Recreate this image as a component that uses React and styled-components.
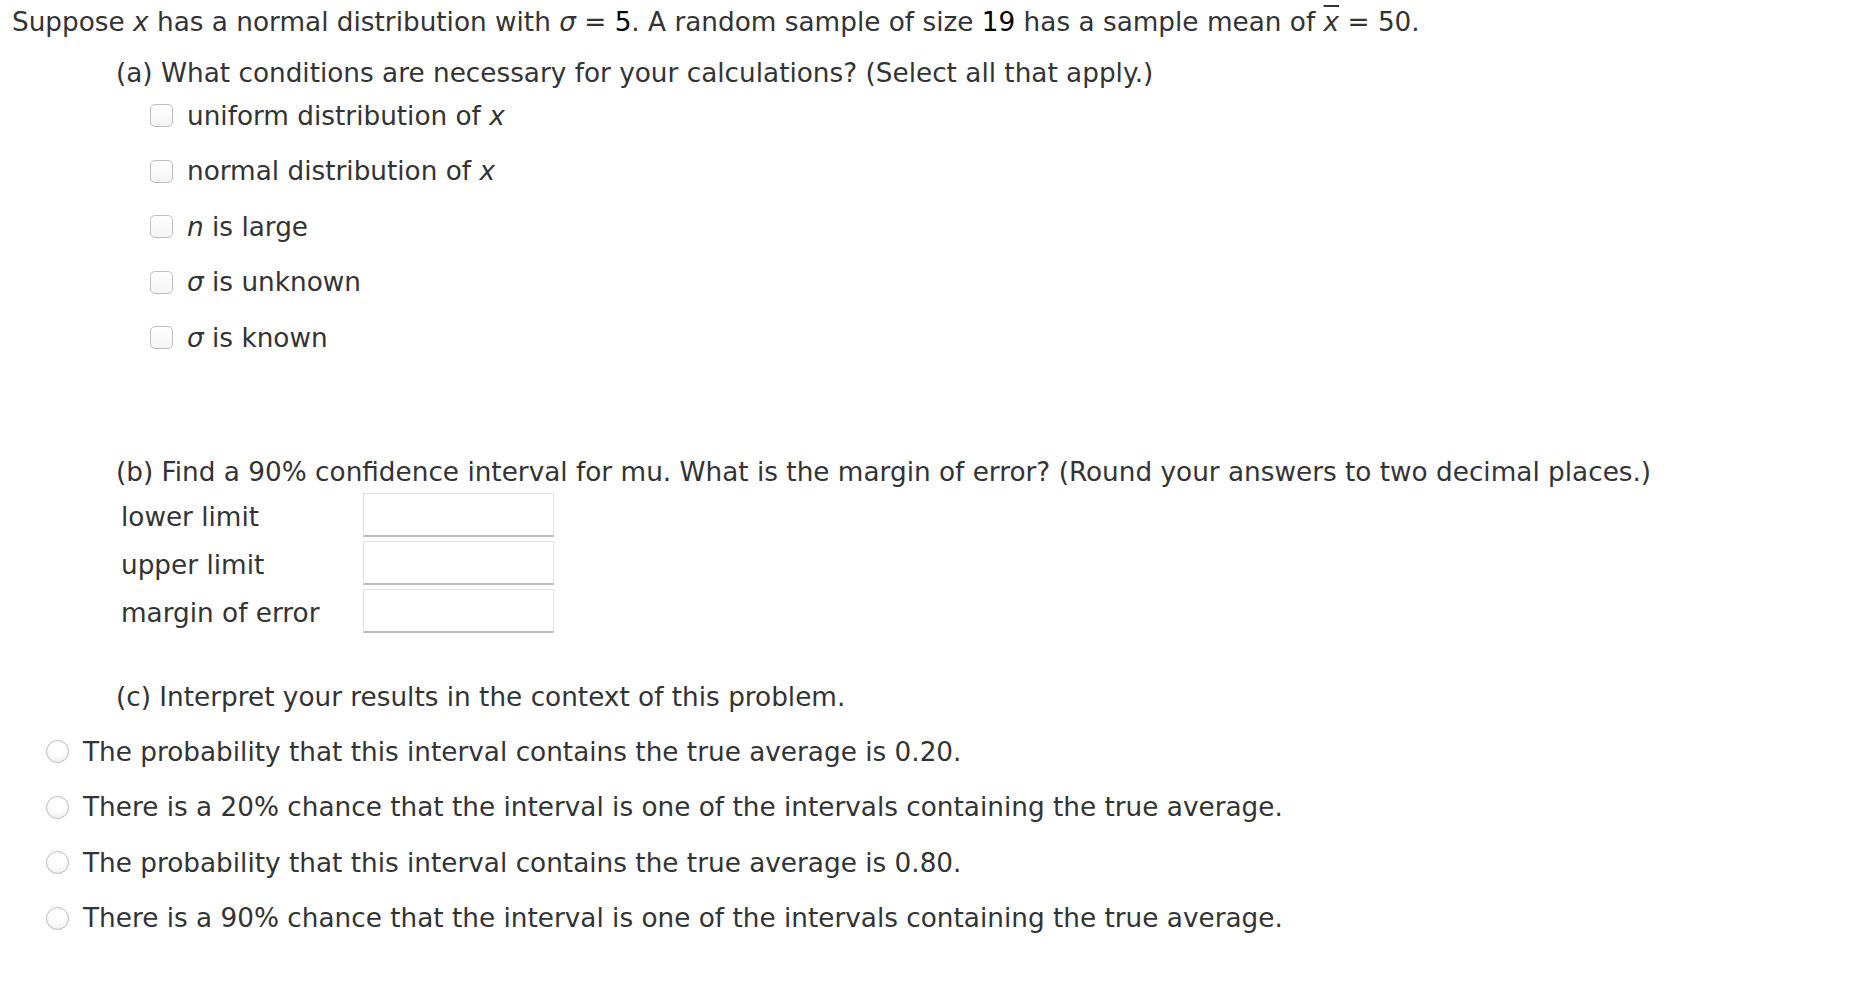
import React from "react";
import styled, { createGlobalStyle } from "styled-components";

const GlobalStyle = createGlobalStyle`
  body {
    margin: 0;
    background: #fff;
    font-family: "DejaVu Sans", Verdana, sans-serif;
    font-size: 26.3px;
    color: #333;
  }
`;

const Page = styled.div`
  padding: 4px 0 40px 12px;
`;

const Intro = styled.p`
  margin: 0;
  line-height: 36px;
`;

const Val = styled.span`
  color: #000;
`;

const Var = styled.i`
  font-style: italic;
`;

const Bar = styled.span`
  font-style: italic;
  text-decoration: overline;
`;

const Part = styled.section`
  margin-top: ${(p) => p.$top}px;
`;

const Heading = styled.div`
  margin-left: 104px;
  line-height: ${(p) => p.$lh || 34}px;
`;

const CheckList = styled.div`
  margin-left: 138px;
`;

const Option = styled.label`
  display: flex;
  align-items: center;
  gap: 14px;
  height: 55.5px;
`;

const Check = styled.span`
  width: 21px;
  height: 21px;
  border: 1px solid #bfbfbf;
  border-radius: 5px;
  background: linear-gradient(#fff, #f4f4f4);
  flex-shrink: 0;
`;

const Fields = styled.div`
  margin: 4px 0 0 109px;
  display: grid;
  grid-template-columns: 242px 191px;
  row-gap: 4px;
  align-items: center;
`;

const FieldLabel = styled.span`
  line-height: 30px;
  padding-top: 4px;
`;

const Field = styled.input`
  box-sizing: border-box;
  height: 44px;
  width: 191px;
  border: 1px solid #e2e2e2;
  border-bottom: 2px solid #bcbcbc;
  background: #fff;
  font: inherit;
  padding: 0 6px;
  outline: none;
`;

const RadioList = styled.div`
  margin-left: 34px;
  margin-top: 10.5px;
`;

const Radio = styled.span`
  width: 21px;
  height: 21px;
  border: 1px solid #bcbcbc;
  border-radius: 50%;
  background: radial-gradient(circle at 50% 30%, #fff 40%, #e9e9e9 100%);
  flex-shrink: 0;
`;

const conditions = [
  <>uniform distribution of <Var>x</Var></>,
  <>normal distribution of <Var>x</Var></>,
  <><Var>n</Var> is large</>,
  <><Var>σ</Var> is unknown</>,
  <><Var>σ</Var> is known</>,
];

const fields = ["lower limit", "upper limit", "margin of error"];

const answers = [
  "The probability that this interval contains the true average is 0.20.",
  "There is a 20% chance that the interval is one of the intervals containing the true average.",
  "The probability that this interval contains the true average is 0.80.",
  "There is a 90% chance that the interval is one of the intervals containing the true average.",
];

export default function App() {
  return (
    <>
      <GlobalStyle />
      <Page>
        <Intro>
          Suppose <Var>x</Var> has a normal distribution with <Var>σ</Var> ={" "}
          <Val>5</Val>. A random sample of size <Val>19</Val> has a sample mean
          of <Bar>x</Bar> = 50.
        </Intro>

        <Part $top={19}>
          <Heading $lh={29}>
            (a) What conditions are necessary for your calculations? (Select all
            that apply.)
          </Heading>
          <CheckList>
            {conditions.map((c, i) => (
              <Option key={i}>
                <Check />
                <span>{c}</span>
              </Option>
            ))}
          </CheckList>
        </Part>

        <Part $top={89}>
          <Heading>
            (b) Find a 90% confidence interval for mu. What is the margin of
            error? (Round your answers to two decimal places.)
          </Heading>
          <Fields>
            {fields.map((f) => (
              <React.Fragment key={f}>
                <FieldLabel>{f}</FieldLabel>
                <Field type="text" />
              </React.Fragment>
            ))}
          </Fields>
        </Part>

        <Part $top={47}>
          <Heading>(c) Interpret your results in the context of this problem.</Heading>
          <RadioList>
            {answers.map((a) => (
              <Option key={a}>
                <Radio />
                <span>{a}</span>
              </Option>
            ))}
          </RadioList>
        </Part>
      </Page>
    </>
  );
}
